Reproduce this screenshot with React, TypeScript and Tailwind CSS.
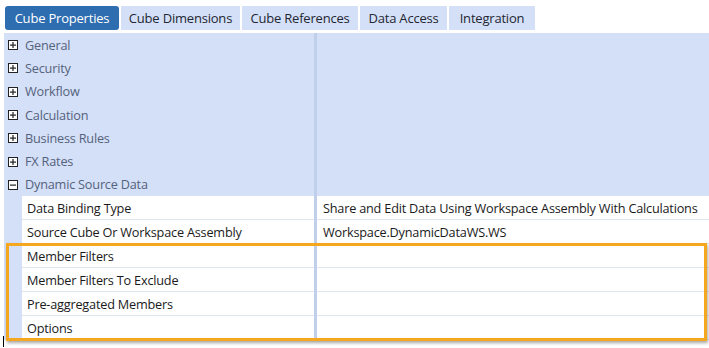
import React from "react";

const font = { fontFamily: '"Open Sans", "Noto Sans", sans-serif' };

function PlusBox({ minus }: { minus?: boolean }) {
  return (
    <svg width="10" height="10" viewBox="0 0 10 10" className="shrink-0">
      <rect x="0.5" y="0.5" width="9" height="9" fill="#fff" stroke="#222" />
      <rect x="2" y="4.5" width="6" height="1.2" fill="#222" />
      {!minus && <rect x="4.4" y="2" width="1.2" height="6" fill="#222" />}
    </svg>
  );
}

const groups = ["General", "Security", "Workflow", "Calculation", "Business Rules", "FX Rates"];
const props: [string, string][] = [
  ["Data Binding Type", "Share and Edit Data Using Workspace Assembly With Calculations"],
  ["Source Cube Or Workspace Assembly", "Workspace.DynamicDataWS.WS"],
  ["Member Filters", ""],
  ["Member Filters To Exclude", ""],
  ["Pre-aggregated Members", ""],
  ["Options", ""],
];

const txt = "text-[12.7px] tracking-[-0.2px]";

function GroupRow({ label, minus }: { label: string; minus?: boolean }) {
  return (
    <div className="flex h-[23.3px]">
      <div className={`w-[310px] shrink-0 flex items-center pl-[4px] pt-[1px] gap-[7px] ${txt} text-[#55627d]`}>
        <PlusBox minus={minus} />
        <span>{label}</span>
      </div>
      <div className="w-[3px] shrink-0 bg-[#c0d0ea]" />
      <div className="flex-1" />
    </div>
  );
}

function PropRow({ name, value }: { name: string; value: string }) {
  return (
    <div className="flex h-[24px]">
      <div className="w-[18px] shrink-0" />
      <div className={`w-[292px] shrink-0 bg-white border-b border-[#dfe6f2] flex items-center pl-[5px] pt-[2px] ${txt} text-[#1a1a1a]`}>
        {name}
      </div>
      <div className="w-[3px] shrink-0 bg-[#c0d0ea]" />
      <div className={`flex-1 min-w-0 bg-white border-b border-[#dfe6f2] flex items-center pl-[6px] pt-[2px] ${txt} text-[#1a1a1a] whitespace-nowrap overflow-hidden`}>
        {value}
      </div>
    </div>
  );
}

export default function App() {
  const tabs = [
    { t: "Cube Properties", w: "w-[114px]", active: true },
    { t: "Cube Dimensions", w: "w-[119px]" },
    { t: "Cube References", w: "w-[116px]" },
    { t: "Data Access", w: "w-[87px]" },
    { t: "Integration", w: "w-[86px]" },
  ];
  return (
    <div className="w-[709px] h-[348px] bg-white relative overflow-hidden" style={font}>
      <div className="flex pl-[5px] pt-[6px] gap-[2px] h-[30px]">
        {tabs.map((tb) => (
          <div
            key={tb.t}
            className={
              tb.active
                ? `${tb.w} h-[24px] pt-[1px] bg-[#2e6db0] text-white rounded-[3px] flex items-center justify-center text-[13px] tracking-[-0.2px]`
                : `${tb.w} h-[24px] pt-[1px] bg-[#d4e0f7] text-[#1f2733] flex items-center justify-center text-[13px] tracking-[-0.2px]`
            }
          >
            {tb.t}
          </div>
        ))}
      </div>
      <div className="ml-[4px] mt-[3px] bg-[#d4e0f7]">
        {groups.map((g) => (
          <GroupRow key={g} label={g} />
        ))}
        <GroupRow label="Dynamic Source Data" minus />
        {props.map(([n, v]) => (
          <PropRow key={n} name={n} value={v} />
        ))}
      </div>
      <div className="absolute left-[6px] top-[243px] w-[701px] h-[98px] border-[3px] border-[#f4a71f] shadow-[1px_2px_3px_rgba(0,0,0,0.35)]" />
      <div className="absolute left-[3px] top-[336px] w-[1px] h-[11px] bg-black" />
    </div>
  );
}
